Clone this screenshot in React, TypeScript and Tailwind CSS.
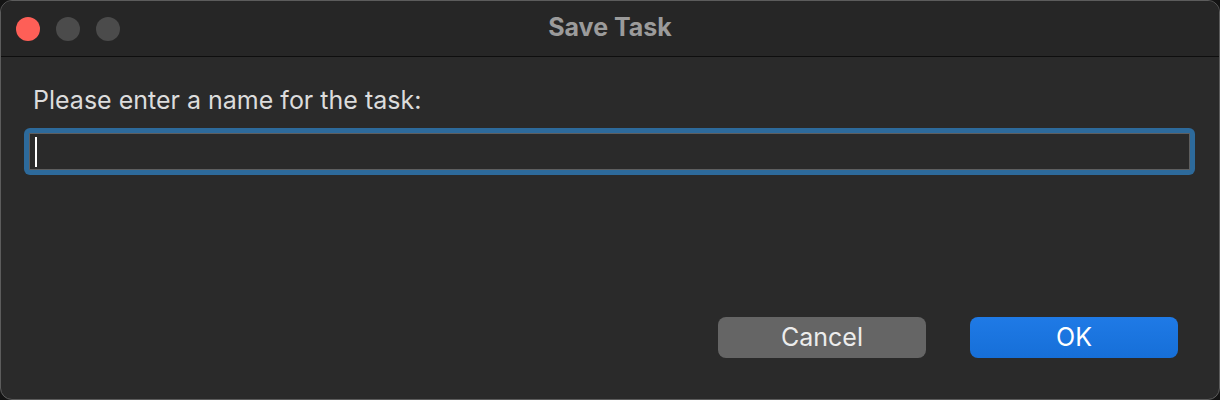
export default function App() {
	return (
		<div className="h-[400px] w-[1220px] bg-[#141414]" style={{ fontFamily: "Inter, 'Liberation Sans', sans-serif" }}>
			<div className="flex h-full w-full flex-col overflow-hidden rounded-[12px] border border-[#5c5c5c] bg-[#2a2a2a]">
				<div className="relative flex h-[56px] shrink-0 items-center border-b border-[#0e0e0e] bg-[#262626]">
					<div className="flex items-center gap-4 pl-[15px]">
						<span className="h-6 w-6 rounded-full bg-[#fe5f57]" />
						<span className="h-6 w-6 rounded-full bg-[#4b4b4b]" />
						<span className="h-6 w-6 rounded-full bg-[#4b4b4b]" />
					</div>
					<div className="pointer-events-none absolute inset-0 flex items-center justify-center pb-[1px] text-[25px] font-bold text-[#9b9b9b]">
						Save Task
					</div>
				</div>
				<div className="flex flex-1 flex-col px-[23px] pt-[29px]">
					<p className="pl-[9px] text-[25px] leading-7 text-[#dcdcdc]">Please enter a name for the task:</p>
					<div className="mt-[14px] mr-[1px] rounded-[6px] bg-[#2d6a9b] p-[5px]">
						<div className="flex h-[37px] items-center border border-[#5e5e5e] bg-[#2a2a2a] px-[5px]">
							<span className="h-[30px] w-[2px] bg-white" />
						</div>
					</div>
					<div className="mt-auto mb-[41px] flex justify-end gap-[44px] pr-[18px]">
						<button type="button" className="h-[41px] w-[208px] rounded-[8px] bg-[#656565] text-[25px] text-[#ececec]">
							Cancel
						</button>
						<button type="button" className="h-[41px] w-[208px] rounded-[8px] bg-gradient-to-b from-[#1f7ae6] to-[#166fd8] text-[25px] text-white">
							OK
						</button>
					</div>
				</div>
			</div>
		</div>
	)
}
